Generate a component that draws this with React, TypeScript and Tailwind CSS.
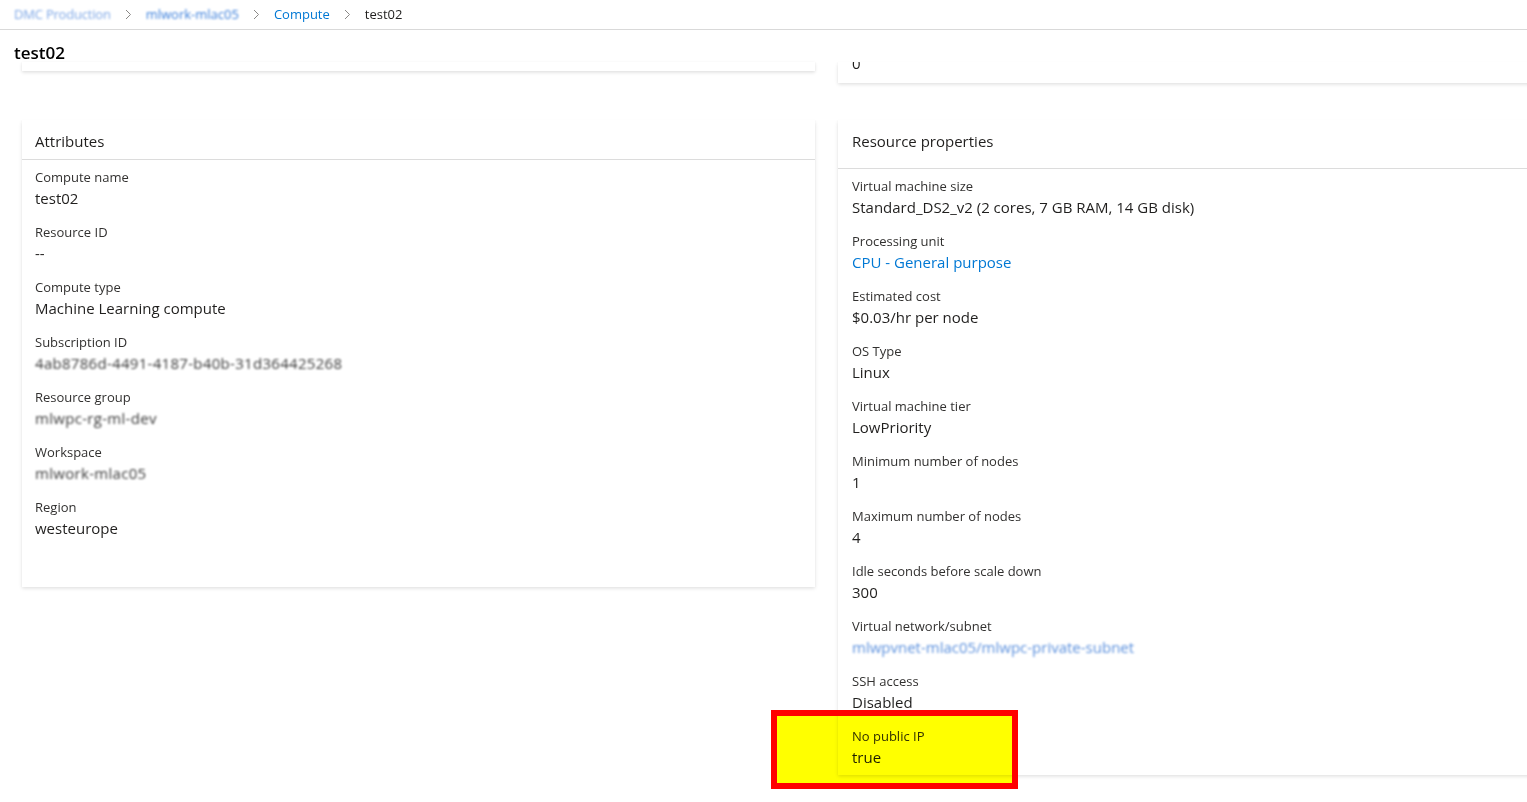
import React from 'react';

interface Prop {
    label: string;
    value: string;
    kind?: 'link' | 'blur' | 'blurLink';
}

const attributes: Prop[] = [
    { label: 'Compute name', value: 'test02' },
    { label: 'Resource ID', value: '--' },
    { label: 'Compute type', value: 'Machine Learning compute' },
    { label: 'Subscription ID', value: '4ab8786d-4491-4187-b40b-31d364425268', kind: 'blur' },
    { label: 'Resource group', value: 'mlwpc-rg-ml-dev', kind: 'blur' },
    { label: 'Workspace', value: 'mlwork-mlac05', kind: 'blur' },
    { label: 'Region', value: 'westeurope' },
];

const resourceProps: Prop[] = [
    { label: 'Virtual machine size', value: 'Standard_DS2_v2 (2 cores, 7 GB RAM, 14 GB disk)' },
    { label: 'Processing unit', value: 'CPU - General purpose', kind: 'link' },
    { label: 'Estimated cost', value: '$0.03/hr per node' },
    { label: 'OS Type', value: 'Linux' },
    { label: 'Virtual machine tier', value: 'LowPriority' },
    { label: 'Minimum number of nodes', value: '1' },
    { label: 'Maximum number of nodes', value: '4' },
    { label: 'Idle seconds before scale down', value: '300' },
    { label: 'Virtual network/subnet', value: 'mlwpvnet-mlac05/mlwpc-private-subnet', kind: 'blurLink' },
    { label: 'SSH access', value: 'Disabled' },
    { label: 'No public IP', value: 'true' },
];

const cardShadow = 'bg-white shadow-[0_1.6px_3.6px_rgba(0,0,0,0.13),0_0.3px_0.9px_rgba(0,0,0,0.11)]';

const Chevron = () => (
    <svg width="7" height="11" viewBox="0 0 7 11" className="shrink-0">
        <path d="M1 1l4.5 4.5L1 10" fill="none" stroke="#8a8886" strokeWidth="1" />
    </svg>
);

const PropItem: React.FC<{ item: Prop }> = ({ item }) => {
    let valueClass = 'text-[15px] leading-[22px] text-[#201f1e]';
    if (item.kind === 'link') valueClass = 'text-[15px] leading-[22px] text-[#0078d4]';
    // blurred (redacted) values
    if (item.kind === 'blur') valueClass = 'text-[15px] leading-[22px] text-[#3a3a3a] blur-[1.2px] tracking-[0.3px]';
    if (item.kind === 'blurLink') valueClass = 'text-[15px] leading-[22px] text-[#5b90dd] blur-[1.2px]';
    return (
        <div className="flex flex-col">
            <span className="text-[13px] leading-[19px] text-[#323130]">{item.label}</span>
            <span className={valueClass}>{item.value}</span>
        </div>
    );
};

export default function App() {
    return (
        <div className="relative w-[1527px] h-[802px] overflow-hidden bg-white font-['Segoe_UI','Open_Sans',sans-serif] text-[#201f1e]">
            {/* Breadcrumb */}
            <div className="h-[30px] border-b border-[#d9d9d9] flex items-center pl-[14px] gap-[14px] text-[13px]">
                <span className="text-[#7fa8e6] blur-[1.2px] tracking-[-0.2px]">DMC Production</span>
                <Chevron />
                <span className="text-[#3b7fdb] blur-[1.2px]">mlwork-mlac05</span>
                <Chevron />
                <span className="text-[#0078d4]">Compute</span>
                <Chevron />
                <span className="text-[#201f1e]">test02</span>
            </div>

            {/* Title */}
            <div className="h-[32px] pl-[14px] pt-[13px]">
                <h1 className="text-[17px] leading-[20px] font-semibold text-black">test02</h1>
            </div>

            {/* Content (scrolled) */}
            <div className="px-[22px] flex gap-[23px] items-start">
                <div className="w-[793px] shrink-0 flex flex-col gap-[49px]">
                    <div className={`${cardShadow} h-[9px]`} />
                    <div className={`${cardShadow} pb-[48px]`}>
                        <div className="h-[40px] pt-[9px] px-[13px] border-b border-[#dcdcdc]">
                            <span className="text-[15px] leading-[20px]">Attributes</span>
                        </div>
                        <div className="pt-[8px] px-[13px] flex flex-col gap-[14px]">
                            {attributes.map(a => (
                                <PropItem key={a.label} item={a} />
                            ))}
                        </div>
                    </div>
                </div>

                <div className="w-[720px] shrink-0 flex flex-col gap-[37px]">
                    <div className={`${cardShadow} h-[21px] overflow-hidden flex flex-col justify-end pb-[10px] px-[14px]`}>
                        <span className="text-[15px] leading-[20px]">0</span>
                    </div>
                    <div className={`${cardShadow} pb-[7px]`}>
                        <div className="h-[49px] pt-[9px] px-[14px] border-b border-[#dcdcdc]">
                            <span className="text-[15px] leading-[20px]">Resource properties</span>
                        </div>
                        <div className="pt-[8px] px-[14px] flex flex-col gap-[14px]">
                            {resourceProps.map(p => (
                                <PropItem key={p.label} item={p} />
                            ))}
                        </div>
                    </div>
                </div>
            </div>

            {/* Highlight annotation */}
            <div className="absolute left-[771px] top-[710px] w-[247px] h-[79px] border-[6px] border-[#ff0000]">
                <div className="w-full h-full bg-[#ffff00] mix-blend-multiply" />
            </div>
        </div>
    );
}
